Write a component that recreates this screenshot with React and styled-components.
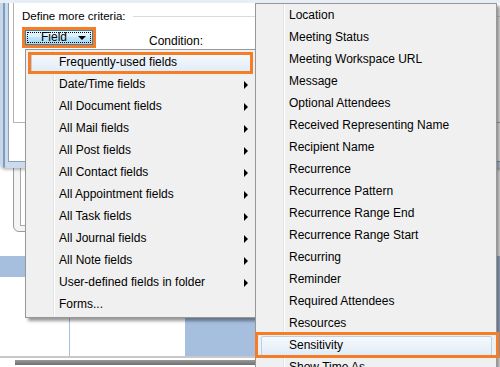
import React from 'react';
import styled, { createGlobalStyle, css } from 'styled-components';

const GlobalStyle = createGlobalStyle`
  html, body {
    margin: 0;
    padding: 0;
    background: #ffffff;
  }
  body {
    font-family: "Liberation Sans", Arial, sans-serif;
    font-size: 12px;
    color: #000;
  }
`;

const ORANGE = '#f47d26';

const Desktop = styled.div`
  position: relative;
  width: 500px;
  height: 367px;
  overflow: hidden;
  background: #ffffff;
`;

// window behind the dialog
const BackWindow = styled.div`
  position: absolute;
  left: 13px;
  top: 150px;
  width: 120px;
  height: 82px;
  box-sizing: border-box;
  background: #f4f4f4;
  border: 1px solid #9a9a9a;
  border-radius: 0 0 0 6px;
  padding: 0 0 6px 6px;
`;

const BackWindowInner = styled.div`
  height: 100%;
  background: #ffffff;
  border-left: 1px solid #a8a8a8;
  border-bottom: 1px solid #a8a8a8;
`;

const DialogFrame = styled.div`
  position: absolute;
  left: 0;
  top: 0;
  width: 560px;
  height: 168px;
  box-sizing: border-box;
  padding: 3px 0 6px 8px;
  border-radius: 0 0 0 6px;
  background:
    linear-gradient(to bottom, #e8eef6 0 3px, transparent 3px),
    linear-gradient(to right, #c6d7ea 0 3px, #7f9cbd 3px 5px, #cbdbec 5px 8px);
  background-color: #bfd2e8;
  box-shadow: 0 2px 3px rgba(0, 0, 0, 0.25);
`;

const DialogClient = styled.div`
  height: 100%;
  box-sizing: border-box;
  background: #ffffff;
  border-left: 1px solid #8aa0b8;
  border-bottom: 1px solid #8aa0b8;
`;

const GroupBox = styled.div`
  margin-left: 4px;
  height: 120px;
  box-sizing: border-box;
  border-left: 1px solid #b4b4b4;
  border-bottom: 1px solid #b4b4b4;
  padding: 6px 0 0 8px;
  display: flex;
  flex-direction: column;
`;

const CriteriaHeader = styled.div`
  display: flex;
  align-items: center;
  height: 14px;
  font-size: 11.5px;
  white-space: nowrap;
`;

const HeaderLine = styled.div`
  flex: 1;
  margin-left: 7px;
  border-top: 1px solid #d5dde3;
`;

const FieldRow = styled.div`
  display: flex;
  align-items: flex-end;
  margin-top: 4px;
`;

const FieldFocus = styled.div`
  width: 74px;
  height: 21px;
  box-sizing: border-box;
  border: 3px solid ${ORANGE};
`;

const FieldButton = styled.div`
  position: relative;
  height: 100%;
  box-sizing: border-box;
  border: 1px solid #3c7fb1;
  background: linear-gradient(to bottom, #eaf6fd 0%, #d9f0fc 45%, #bee6fd 50%, #a7d9f5 100%);
  display: flex;
  align-items: center;
  padding: 0 4px 0 15px;
  font-size: 12px;

  &::after {
    content: '';
    position: absolute;
    inset: 1px;
    border: 1px dotted #000;
  }
`;

const FieldLabel = styled.span`
  flex: 1;
  line-height: 13px;
`;

const DownArrow = styled.span`
  width: 0;
  height: 0;
  border-left: 4px solid transparent;
  border-right: 4px solid transparent;
  border-top: 4px solid #000;
  margin-right: 2px;
`;

const ConditionLabel = styled.span`
  margin-left: 53px;
  line-height: 14px;
  font-size: 12px;
`;

const Table = styled.div`
  position: absolute;
  left: 0;
  top: 256px;
  width: 500px;
  display: flex;
  flex-direction: column;
`;

const TableHeader = styled.div`
  height: 21px;
  background: #a7bfdf;
`;

const TableBody = styled.div`
  height: 79px;
  display: grid;
  grid-template-columns: 70px 115px 1fr;
  border-bottom: 2px solid #c8c8c8;
`;

const TableCell = styled.div`
  background: ${(p) => (p.$selected ? '#a7bfdf' : '#ffffff')};
  border-right: ${(p) => (p.$line ? '1px solid #a7bfdf' : 'none')};
`;

const FooterShade = styled.div`
  height: 5px;
  margin: 2px 0 0 15px;
  width: 240px;
  background: linear-gradient(to bottom, #9a9a9a, #6f6f6f);
`;

const Menu = styled.div`
  position: absolute;
  left: ${(p) => p.$left}px;
  top: ${(p) => p.$top}px;
  width: ${(p) => p.$width}px;
  height: ${(p) => p.$height}px;
  box-sizing: border-box;
  padding: ${(p) => p.$pad};
  border: 1px solid #979797;
  background:
    linear-gradient(to right, transparent 27px, #e2e3e3 27px 28px, #ffffff 28px 29px, transparent 29px);
  background-color: #f0f0f0;
  box-shadow: 3px 3px 3px rgba(0, 0, 0, 0.4);
  display: flex;
  flex-direction: column;
`;

const MenuItem = styled.div`
  position: relative;
  height: 22px;
  flex: none;
  display: flex;
  align-items: center;
  padding: 0 6px 0 31px;
  white-space: nowrap;

  ${(p) =>
    p.$active &&
    css`
      &::before {
        content: '';
        position: absolute;
        inset: 2px 2px 0 3px;
        border: 1px solid #b9d0ec;
        border-radius: 2px;
        background: linear-gradient(to bottom, #f6f9fd, #e1ebf7);
      }
      &::after {
        content: '';
        position: absolute;
        inset: ${p.$ring};
        border: 3px solid ${ORANGE};
      }
    `}
`;

const ItemText = styled.span`
  position: relative;
  flex: 1;
  z-index: 1;
`;

const SubArrow = styled.span`
  width: 0;
  height: 0;
  border-top: 4px solid transparent;
  border-bottom: 4px solid transparent;
  border-left: 4px solid #000;
  margin-top: 1px;
`;

const mainItems = [
  'Frequently-used fields',
  'Date/Time fields',
  'All Document fields',
  'All Mail fields',
  'All Post fields',
  'All Contact fields',
  'All Appointment fields',
  'All Task fields',
  'All Journal fields',
  'All Note fields',
  'User-defined fields in folder',
];

const subItems = [
  'Location',
  'Meeting Status',
  'Meeting Workspace URL',
  'Message',
  'Optional Attendees',
  'Received Representing Name',
  'Recipient Name',
  'Recurrence',
  'Recurrence Pattern',
  'Recurrence Range End',
  'Recurrence Range Start',
  'Recurring',
  'Reminder',
  'Required Attendees',
  'Resources',
  'Sensitivity',
  'Show Time As',
];

const App = () => {
  return (
    <>
      <GlobalStyle />
      <Desktop>
        <Table>
          <TableHeader />
          <TableBody>
            <TableCell $line />
            <TableCell />
            <TableCell $selected />
          </TableBody>
          <FooterShade />
        </Table>

        <BackWindow>
          <BackWindowInner />
        </BackWindow>

        <DialogFrame>
          <DialogClient>
            <GroupBox>
              <CriteriaHeader>
                Define more criteria:
                <HeaderLine />
              </CriteriaHeader>
              <FieldRow>
                <FieldFocus>
                  <FieldButton>
                    <FieldLabel>Field</FieldLabel>
                    <DownArrow />
                  </FieldButton>
                </FieldFocus>
                <ConditionLabel>Condition:</ConditionLabel>
              </FieldRow>
            </GroupBox>
          </DialogClient>
        </DialogFrame>

        <Menu $left={25} $top={49} $width={232} $height={269} $pad="1px 2px">
          {mainItems.map((label, i) => (
            <MenuItem key={label} $active={i === 0} $ring="1px 1px -1px 0">
              <ItemText>{label}</ItemText>
              <SubArrow />
            </MenuItem>
          ))}
          <MenuItem>
            <ItemText>Forms...</ItemText>
          </MenuItem>
        </Menu>

        <Menu $left={255} $top={3} $width={242} $height={420} $pad="0 2px">
          {subItems.map((label) => (
            <MenuItem
              key={label}
              $active={label === 'Sensitivity'}
              $ring="-2px -5px -2px -3px"
            >
              <ItemText>{label}</ItemText>
            </MenuItem>
          ))}
        </Menu>
      </Desktop>
    </>
  );
};

export default App;
